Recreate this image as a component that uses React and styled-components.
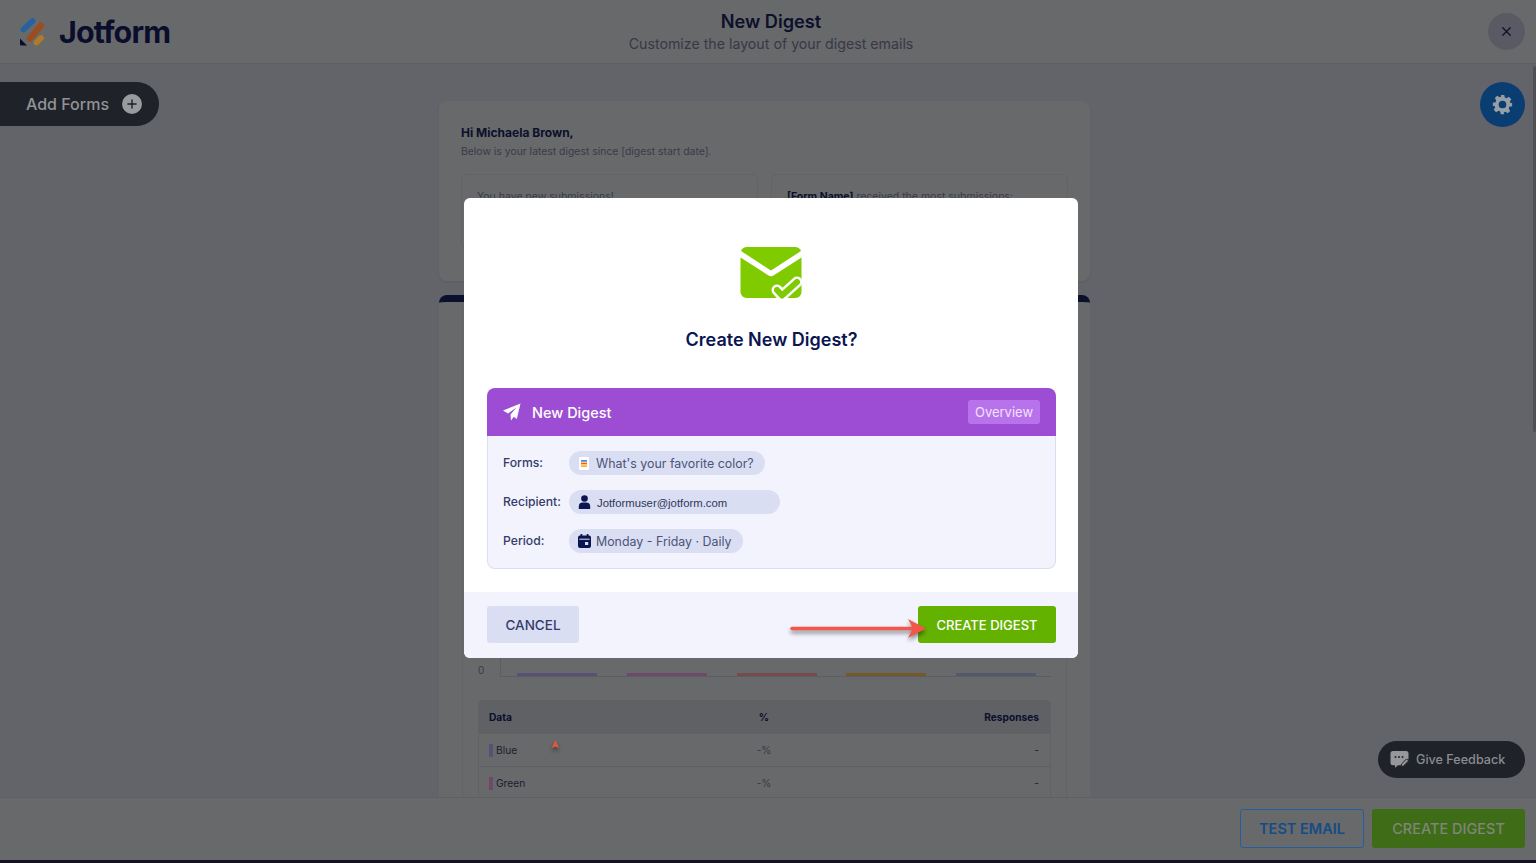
import React from "react";
import styled, { createGlobalStyle } from "styled-components";
import { Plus, X } from "lucide-react";

const Global = createGlobalStyle`
  html, body { margin: 0; padding: 0; height: 863px; overflow: hidden; background: #636469; }
  * { box-sizing: border-box; }
  body { font-family: Inter, "Liberation Sans", sans-serif; }
`;

const Page = styled.div`
  position: relative;
  width: 1536px;
  height: 863px;
  display: flex;
  flex-direction: column;
  overflow: hidden;
  background: #636469;
`;
const Header = styled.header`
  height: 64px;
  flex: none;
  display: flex;
  align-items: center;
  justify-content: space-between;
  padding: 0 11px 0 20px;
  background: #68696b;
  border-bottom: 1px solid #5f6065;
`;
const Logo = styled.div`
  display: flex;
  align-items: center;
  gap: 13px;
  width: 200px;
`;
const Wordmark = styled.span`
  font-size: 30.5px;
  font-weight: 700;
  letter-spacing: -0.9px;
  color: #0a0e2c;
`;
const TitleBlock = styled.div`
  position: absolute;
  top: 10px;
  left: 6px;
  right: 0;
  text-align: center;
`;
const Title = styled.div`
  font-size: 18.2px;
  line-height: 23px;
  font-weight: 600;
  color: #0c102b;
`;
const Subtitle = styled.div`
  font-size: 14.2px;
  line-height: 22px;
  color: #363848;
`;
const CloseBtn = styled.div`
  position: relative;
  width: 37px;
  height: 37px;
  border-radius: 50%;
  background: #595a64;
  color: #0d1028;
  display: flex;
  align-items: center;
  justify-content: center;
`;
const Main = styled.main`
  flex: 1;
  min-height: 0;
  overflow: hidden;
  display: flex;
  justify-content: flex-start;
  padding: 37px 0 0 439px;
  position: relative;
`;
const Column = styled.div`
  width: 651px;
  display: flex;
  flex-direction: column;
  gap: 14px;
`;
const Card = styled.section`
  height: 180px;
  flex: none;
  padding: 24px 22px;
  background: #68696a;
  border-radius: 8px;
  box-shadow: 0 1px 3px rgba(0, 0, 0, 0.08);
`;
const Hello = styled.div`
  font-size: 12px;
  line-height: 15px;
  font-weight: 700;
  color: #0b102c;
`;
const Since = styled.div`
  margin-top: 4px;
  font-size: 10.4px;
  line-height: 15px;
  color: #383a4a;
`;
const Boxes = styled.div`
  margin-top: 15px;
  display: grid;
  grid-template-columns: 297px 297px;
  gap: 13px;
`;
const Box = styled.div`
  height: 75px;
  padding: 15px;
  border: 1px solid #626367;
  border-radius: 6px;
  font-size: 10.5px;
  line-height: 14px;
  color: #383a4a;
  b { color: #0b102c; }
`;
const ReportCard = styled.section`
  flex: none;
  height: 600px;
  padding: 0 23px;
  background: #68696a;
  border-top: 7px solid #0b102c;
  border-radius: 8px 8px 0 0;
`;
const ReportInner = styled.div`
  height: 100%;
  padding: 275px 15px 0 15px;
  border-left: 1px solid #626367;
  border-right: 1px solid #626367;
`;
const Chart = styled.div`
  display: flex;
  align-items: flex-end;
  height: 100px;
`;
const ZeroLabel = styled.span`
  width: 22px;
  flex: none;
  margin-bottom: 1px;
  font-size: 10px;
  line-height: 12px;
  color: #383a4a;
`;
const Plot = styled.div`
  flex: 1;
  height: 100%;
  display: flex;
  align-items: flex-end;
  justify-content: space-between;
  padding: 0 15px 0 16px;
  border-left: 1px solid #5c5d62;
  border-bottom: 1px solid #5c5d62;
`;
const Bar = styled.div`
  width: 80px;
  height: 3px;
  background: ${(p) => p.$c};
`;
const DataTable = styled.div`
  margin-top: 23px;
  border-radius: 4px 4px 0 0;
  border: 1px solid #616266;
  font-size: 10.2px;
`;
const Row = styled.div`
  display: grid;
  grid-template-columns: 1fr 40px 1fr;
  align-items: center;
  height: 33px;
  padding: 0 11px 0 10px;
  background: ${(p) => (p.$head ? "#606165" : "transparent")};
  border-bottom: 1px solid #5f6064;
  color: ${(p) => (p.$head ? "#0b102c" : "#1a1d30")};
  font-weight: ${(p) => (p.$head ? 700 : 400)};
  span:nth-child(2) { text-align: center; color: ${(p) => (p.$head ? "#0b102c" : "#383a4a")}; }
  span:nth-child(3) { text-align: right; }
`;
const Swatch = styled.i`
  display: inline-block;
  width: 4px;
  height: 13px;
  margin-right: 3px;
  vertical-align: -3px;
  background: ${(p) => p.$c};
`;
const Stray = styled.svg`
  position: absolute;
  left: 550px;
  top: 740px;
  overflow: visible;
  filter: drop-shadow(0 3px 2px rgba(0, 0, 0, 0.45));
`;
const Footer = styled.footer`
  height: 63px;
  flex: none;
  display: flex;
  align-items: center;
  justify-content: flex-end;
  gap: 8px;
  padding: 0 11px 2px 0;
  background: #68696a;
  border-top: 1px solid #5f6063;
  position: relative;
`;
const Strip = styled.div`
  height: 3px;
  flex: none;
  background: #141022;
`;
const TestBtn = styled.div`
  width: 124px;
  height: 39px;
  display: flex;
  align-items: center;
  justify-content: center;
  border: 1px solid #255e9e;
  border-radius: 3px;
  font-size: 14.5px;
  font-weight: 600;
  color: #164b85;
`;
const CreateBtnDim = styled.div`
  width: 153px;
  height: 39px;
  display: flex;
  align-items: center;
  justify-content: center;
  border-radius: 3px;
  background: #3f6c17;
  font-size: 14.5px;
  font-weight: 500;
  color: #7e8678;
`;
const AddForms = styled.div`
  position: absolute;
  left: 0;
  top: 82px;
  width: 159px;
  height: 44px;
  padding-left: 26px;
  display: flex;
  align-items: center;
  gap: 13px;
  background: #1f2329;
  border-radius: 0 22px 22px 0;
  font-size: 16px;
  font-weight: 500;
  color: #929396;
`;
const AddIcon = styled.span`
  width: 20px;
  height: 20px;
  border-radius: 50%;
  background: #9a9b9e;
  color: #1f2329;
  display: flex;
  align-items: center;
  justify-content: center;
`;
const Gear = styled.div`
  position: absolute;
  left: 1480px;
  top: 82px;
  width: 45px;
  height: 45px;
  border-radius: 50%;
  background: #0a3d72;
  display: flex;
  align-items: center;
  justify-content: center;
`;
const Feedback = styled.div`
  position: absolute;
  left: 1378px;
  top: 741px;
  width: 147px;
  height: 37px;
  padding-left: 12px;
  display: flex;
  align-items: center;
  gap: 7px;
  background: #1f2329;
  border-radius: 19px;
  font-size: 12.6px;
  font-weight: 500;
  color: #8a8b8f;
`;
const Scroll = styled.div`
  position: absolute;
  right: 0;
  top: 66px;
  width: 3px;
  height: 366px;
  background: #4f5055;
  border-radius: 2px;
`;
const Modal = styled.div`
  position: absolute;
  left: 464px;
  top: 198px;
  width: 614px;
  height: 460px;
  display: flex;
  flex-direction: column;
  background: #fff;
  border-radius: 6px;
  overflow: hidden;
`;
const ModalBody = styled.div`
  flex: 1;
  padding: 49px 22px 0 23px;
  display: flex;
  flex-direction: column;
  align-items: center;
`;
const ModalTitle = styled.h2`
  margin: 26px 0 0;
  font-size: 18px;
  line-height: 26px;
  font-weight: 600;
  color: #0a1551;
`;
const Panel = styled.div`
  width: 100%;
  margin-top: 35px;
  height: 181px;
  display: flex;
  flex-direction: column;
`;
const PanelHead = styled.div`
  height: 48px;
  flex: none;
  padding: 0 16px;
  display: flex;
  align-items: center;
  background: #9c4dd3;
  color: #fff;
  border-radius: 8px 8px 0 0;
`;
const PanelTitle = styled.span`
  margin-left: 11px;
  flex: 1;
  font-size: 14.5px;
  font-weight: 500;
`;
const Tag = styled.span`
  height: 24px;
  width: 72px;
  display: flex;
  align-items: center;
  justify-content: center;
  border-radius: 3px;
  background: #b872ec;
  color: #f0e3fb;
  font-size: 13px;
`;
const Rows = styled.div`
  flex: 1;
  padding: 15px 15px 0;
  display: flex;
  flex-direction: column;
  gap: 15px;
  background: #f3f3fe;
  border: 1px solid #dadef3;
  border-top: 0;
  border-radius: 0 0 8px 8px;
`;
const InfoRow = styled.div`
  display: flex;
  align-items: center;
  height: 24px;
`;
const InfoLabel = styled.span`
  width: 66px;
  flex: none;
  font-size: 12.2px;
  font-weight: 500;
  color: #343c6a;
  position: relative;
  top: -1px;
`;
const Pill = styled.span`
  height: 24px;
  width: ${(p) => p.$w}px;
  padding-left: ${(p) => p.$pad}px;
  display: flex;
  align-items: center;
  gap: ${(p) => p.$gap}px;
  background: #dadef3;
  border-radius: 12px;
  font-family: ${(p) => (p.$arial ? '"Liberation Sans", Arial, sans-serif' : 'Inter, sans-serif')};
  font-size: ${(p) => (p.$arial ? "11.3px" : "12.4px")};
  color: ${(p) => (p.$arial ? "#2f3659" : "#4c5379")};
`;
const PillText = styled.span`
  position: relative;
  top: ${(p) => p.$dy || 0}px;
`;
const ModalFoot = styled.div`
  height: 66px;
  flex: none;
  padding: 0 22px 1px 23px;
  display: flex;
  align-items: center;
  justify-content: space-between;
  background: #f3f3fe;
  position: relative;
`;
const CancelBtn = styled.div`
  width: 92px;
  height: 37px;
  display: flex;
  align-items: center;
  justify-content: center;
  border-radius: 3px;
  background: #dadef3;
  color: #343c6a;
  font-size: 13.5px;
  font-weight: 500;
`;
const CreateBtn = styled.div`
  width: 138px;
  height: 37px;
  display: flex;
  align-items: center;
  justify-content: center;
  border-radius: 3px;
  background: #64b200;
  color: #fff;
  font-size: 13px;
  font-weight: 500;
`;
const Arrow = styled.svg`
  position: absolute;
  left: 322px;
  top: 26.5px;
  overflow: visible;
  filter: drop-shadow(0 3px 2px rgba(0, 0, 0, 0.45));
`;

const LogoMark = () => (
  <svg width="26" height="30" viewBox="0 0 26 30">
    <path d="M3.500 12.500L12.500 4" stroke="#27619f" strokeWidth="5.800" strokeLinecap="round" />
    <path d="M10 21.500L21 8.500" stroke="#9d4c1f" strokeWidth="6" strokeLinecap="round" />
    <path d="M16.500 25.500L21 21" stroke="#ae7c28" strokeWidth="5.800" strokeLinecap="round" />
    <path d="M0 21.500L7 28.500H1A1 1 0 0 1 0 27.500Z" fill="#0a0e2c" />
  </svg>
);
const GearIcon = () => (
  <svg width="21" height="21" viewBox="0 0 24 24">
    <path
      fill="#989ea6"
      fillRule="evenodd"
      d="M10 1h4l.7 3.100 1.900.8 2.700-1.700 2.800 2.800-1.700 2.700.8 1.900L23 10v4l-3.100.7-.8 1.900 1.700 2.700-2.800 2.800-2.700-1.700-1.900.8L14 23h-4l-.7-3.100-1.900-.8-2.700 1.700-2.800-2.800 1.700-2.700-.8-1.900L1 14v-4l3.100-.7.8-1.900-1.700-2.700 2.800-2.800 2.700 1.700 1.900-.8zM12 7.600a4.400 4.400 0 1 0 0 8.800 4.400 4.400 0 0 0 0-8.800z"
    />
  </svg>
);
const FeedbackIcon = () => (
  <svg width="19" height="17" viewBox="0 0 19 17">
    <path d="M3 0h13a2.500 2.500 0 0 1 2.500 2.500V8l-6 6.200H8l-3 2.600v-2.600H3A2.500 2.500 0 0 1 .5 11.700V2.500A2.500 2.500 0 0 1 3 0z" fill="#96979a" />
    <circle cx="5.500" cy="6" r="1" fill="#1f2329" />
    <circle cx="9" cy="6" r="1" fill="#1f2329" />
    <circle cx="12.500" cy="6" r="1" fill="#1f2329" />
    <path d="M11 15.500l.6-2.600 5-5 2 2-5 5z" fill="#96979a" stroke="#1f2329" strokeWidth="1" />
  </svg>
);
const MailCheck = () => (
  <svg width="63" height="54" viewBox="0 0 63 54">
    <path d="M7 0h48a6.500 6.500 0 0 1 6 4L31 23.500 1 4a6.500 6.500 0 0 1 6-4z" fill="#7fcb00" />
    <path d="M.5 10.500L28.500 28.500a5 5 0 0 0 5 0L61.500 10.500V45a6 6 0 0 1-6 6H6.500a6 6 0 0 1-6-6z" fill="#7fcb00" />
    <path d="M37 43l5 5.500L57 35" fill="none" stroke="#fff" strokeWidth="11" strokeLinecap="round" strokeLinejoin="round" />
    <path d="M37 43l5 5.500L57 35" fill="none" stroke="#7fcb00" strokeWidth="6" strokeLinecap="round" strokeLinejoin="round" />
  </svg>
);
const Plane = () => (
  <svg width="18" height="18" viewBox="0 0 18 18">
    <path d="M17.500.5L0 7.500l5 3L13.500 4.500l-6 7 .5 6 2.800-3.800 3 2.300z" fill="#fff" />
  </svg>
);
const FormIcon = () => (
  <svg width="10" height="13" viewBox="0 0 10 13">
    <rect width="10" height="13" rx="1" fill="#fff" />
    <rect x="2" y="3" width="6" height="1.800" fill="#4d8fe0" />
    <rect x="2" y="5.600" width="6" height="1.800" fill="#ff6100" />
    <rect x="2" y="8.200" width="6" height="1.800" fill="#ffb629" />
  </svg>
);
const UserIcon = () => (
  <svg width="13" height="14" viewBox="0 0 13 14">
    <circle cx="6.500" cy="3.500" r="3.300" fill="#0a1551" />
    <path d="M0.800 14v-2.500A4 4 0 0 1 4.800 7.500h3.400a4 4 0 0 1 4 4V14z" fill="#0a1551" />
  </svg>
);
const CalIcon = () => (
  <svg width="13" height="14" viewBox="0 0 13 14">
    <path d="M2 1.500h9A2 2 0 0 1 13 3.500v8.500a2 2 0 0 1-2 2H2a2 2 0 0 1-2-2V3.500a2 2 0 0 1 2-2z" fill="#0a1551" />
    <rect x="2.500" y="0" width="1.800" height="3" rx=".6" fill="#0a1551" />
    <rect x="8.700" y="0" width="1.800" height="3" rx=".6" fill="#0a1551" />
    <rect x="1.400" y="4.700" width="10.200" height="1" fill="#dadef3" />
    <rect x="7" y="8" width="3.200" height="3" fill="#dadef3" />
  </svg>
);

const bars = ["#5a5075", "#6d4a68", "#764b4c", "#75592a", "#54596a"];

export default function App() {
  return (
    <Page>
      <Global />
      <Header>
        <Logo>
          <LogoMark />
          <Wordmark>Jotform</Wordmark>
        </Logo>
        <TitleBlock>
          <Title>New Digest</Title>
          <Subtitle>Customize the layout of your digest emails</Subtitle>
        </TitleBlock>
        <CloseBtn>
          <X size={15} strokeWidth={2} />
        </CloseBtn>
      </Header>
      <Main>
        <Column>
          <Card>
            <Hello>Hi Michaela Brown,</Hello>
            <Since>Below is your latest digest since [digest start date].</Since>
            <Boxes>
              <Box>You have new submissions!</Box>
              <Box>
                <b>[Form Name]</b> received the most submissions:
              </Box>
            </Boxes>
          </Card>
          <ReportCard>
            <ReportInner>
              <Chart>
                <ZeroLabel>0</ZeroLabel>
                <Plot>
                  {bars.map((c) => (
                    <Bar key={c} $c={c} />
                  ))}
                </Plot>
              </Chart>
              <DataTable>
                <Row $head>
                  <span>Data</span>
                  <span>%</span>
                  <span>Responses</span>
                </Row>
                <Row>
                  <span>
                    <Swatch $c="#5a5075" />
                    Blue
                  </span>
                  <span>-%</span>
                  <span>-</span>
                </Row>
                <Row>
                  <span>
                    <Swatch $c="#6d4a68" />
                    Green
                  </span>
                  <span>-%</span>
                  <span>-</span>
                </Row>
              </DataTable>
            </ReportInner>
          </ReportCard>
        </Column>
      </Main>
      <Footer>
        <TestBtn>TEST EMAIL</TestBtn>
        <CreateBtnDim>CREATE DIGEST</CreateBtnDim>
      </Footer>
      <Strip />
      <Scroll />
      <Stray width="11" height="10" viewBox="0 0 11 10">
        <path d="M5.500 0L9 8 5.500 6.500 1.500 8z" fill="#e8543f" />
      </Stray>
      <AddForms>
        Add Forms
        <AddIcon>
          <Plus size={14} strokeWidth={2.5} />
        </AddIcon>
      </AddForms>
      <Gear>
        <GearIcon />
      </Gear>
      <Feedback>
        <FeedbackIcon />
        Give Feedback
      </Feedback>
      <Modal>
        <ModalBody>
          <MailCheck />
          <ModalTitle>Create New Digest?</ModalTitle>
          <Panel>
            <PanelHead>
              <Plane />
              <PanelTitle>New Digest</PanelTitle>
              <Tag>Overview</Tag>
            </PanelHead>
            <Rows>
              <InfoRow>
                <InfoLabel>Forms:</InfoLabel>
                <Pill $w={196} $pad={10} $gap={7}>
                  <FormIcon />
                  What's your favorite color?
                </Pill>
              </InfoRow>
              <InfoRow>
                <InfoLabel>Recipient:</InfoLabel>
                <Pill $w={211} $pad={9} $gap={6} $arial>
                  <UserIcon />
                  <PillText $dy={1}>Jotformuser@jotform.com</PillText>
                </Pill>
              </InfoRow>
              <InfoRow>
                <InfoLabel>Period:</InfoLabel>
                <Pill $w={174} $pad={9} $gap={5}>
                  <CalIcon />
                  Monday - Friday · Daily
                </Pill>
              </InfoRow>
            </Rows>
          </Panel>
        </ModalBody>
        <ModalFoot>
          <CancelBtn>CANCEL</CancelBtn>
          <CreateBtn>CREATE DIGEST</CreateBtn>
          <Arrow width="140" height="22" viewBox="0 0 140 22">
            <path d="M6 9.500H126" stroke="#f4564a" strokeWidth="3.400" strokeLinecap="round" />
            <path d="M122 0 L140 9.500 L122 19 L127 9.500Z" fill="#f4564a" />
          </Arrow>
        </ModalFoot>
      </Modal>
    </Page>
  );
}
